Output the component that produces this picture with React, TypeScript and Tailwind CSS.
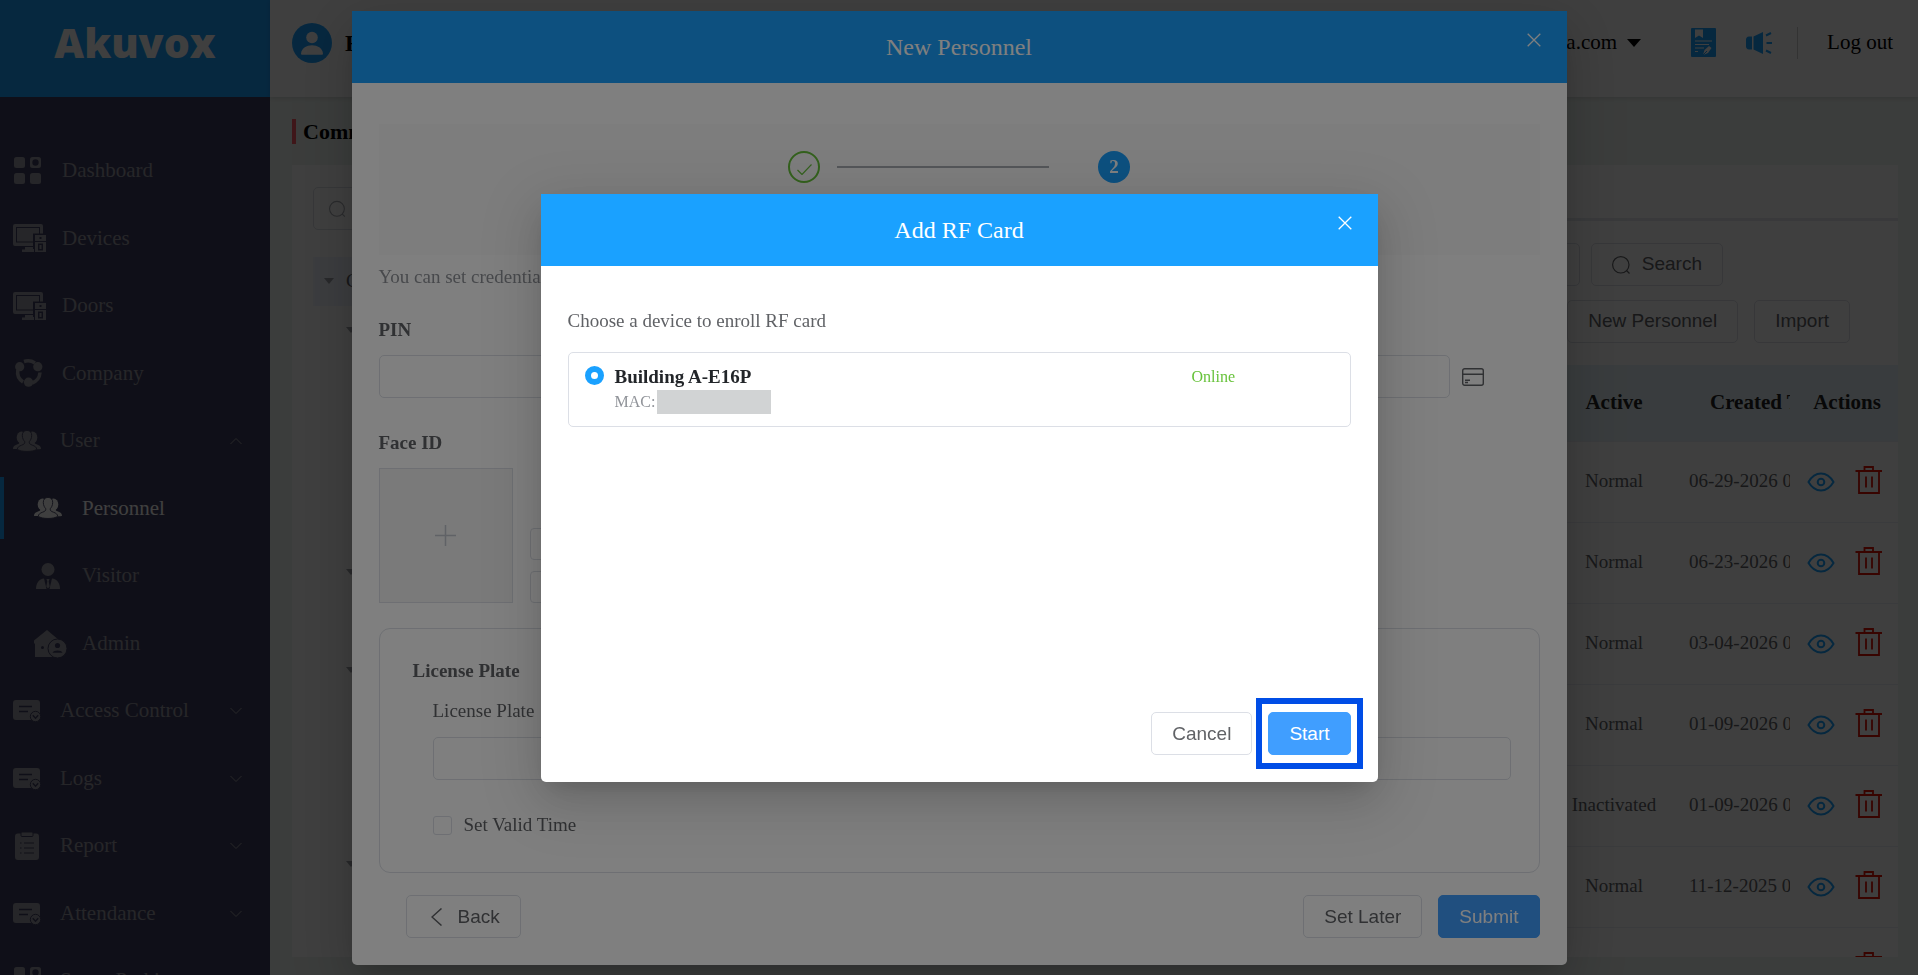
import type { ReactNode } from "react";
import clsx from "clsx";

const SERIF = "font-['Liberation_Serif','Times_New_Roman',serif]";
const SANS = "font-['Liberation_Sans',Arial,sans-serif]";

/* ---------- icons ---------- */

function GridIcon() {
  return (
    <svg className="w-7 h-7" viewBox="0 0 28 28" fill="currentColor">
      <rect x="1" y="0" width="11" height="11" rx="2.500" />
      <path fillRule="evenodd" d="M19.500 0h6A2.500 2.500 0 0 1 28 2.500v6a2.500 2.500 0 0 1-2.500 2.500h-6A2.500 2.500 0 0 1 17 8.500v-6A2.500 2.500 0 0 1 19.500 0zm3 2.300a3.200 3.200 0 1 0 0 6.400 3.200 3.200 0 0 0 0-6.400z" />
      <rect x="1" y="16" width="11" height="11" rx="2.500" />
      <rect x="17" y="16" width="11" height="11" rx="2.500" />
    </svg>
  );
}

function DeviceIcon() {
  return (
    <svg className="w-[34px] h-7" viewBox="0 0 34 28" fill="currentColor">
      <path fillRule="evenodd" d="M2 0h26a2 2 0 0 1 2 2v7.500h-3V3H3v15.500h17V22H2a2 2 0 0 1-2-2V2a2 2 0 0 1 2-2z" />
      <path d="M4 4h22v5.500h-6V17.500H4z" />
      <path d="M12 23h8v2h1v3H9v-2.500h3z" />
      <path fillRule="evenodd" d="M22 11h11v6H22zm4.500 2v2h2v-2z" />
      <path fillRule="evenodd" d="M22 18h11v10H22zm3 1.500v7h5v-7zm1.500 1.500h2v4h-2z" />
    </svg>
  );
}

function CompanyIcon() {
  return (
    <svg className="w-[30px] h-7" viewBox="-2 0 30 28">
      <g fill="none" stroke="currentColor" strokeWidth="3.500">
        <path d="M9 2.500A13 13 0 0 1 20 4" />
        <path d="M2.800 11a12 12 0 0 0 5.200 12" />
        <path d="M25 13.500a12 12 0 0 1-8 10.500" />
      </g>
      <g fill="currentColor">
        <circle cx="4.700" cy="7.700" r="4.600" />
        <circle cx="22.800" cy="7.700" r="4.600" />
        <circle cx="13.500" cy="23.200" r="4.600" />
      </g>
    </svg>
  );
}

function UsersIcon() {
  return (
    <svg className="w-7 h-[22px]" viewBox="0 0 28 22" fill="currentColor">
      <ellipse cx="8.500" cy="7.500" rx="4.800" ry="6" />
      <ellipse cx="19.500" cy="7.500" rx="4.800" ry="6" />
      <path d="M0 19c0-2.500 1.500-3.700 4-4.500 1.500-.5 2.500-1 2.500-2.500h15c0 1.500 1 2 2.500 2.500 2.500.8 4 2 4 4.500-2 .6-26 .6-28 0z" />
      <path
        stroke="#3f3f60"
        strokeWidth=".9"
        d="M14 .4c3.200 0 4.900 2.300 4.700 5.300-.2 2.800-1.200 4.700-2.400 5.900-.4 1.900.6 2.700 3.100 3.600 2.600.9 4.300 2.200 4.300 4-3 3-16.400 3-19.400 0 0-1.800 1.700-3.100 4.300-4 2.500-.9 3.500-1.700 3.100-3.600-1.200-1.200-2.200-3.100-2.400-5.900C9.100 2.700 10.800.4 14 .4z"
      />
    </svg>
  );
}

function VisitorIcon() {
  return (
    <svg className="w-[26px] h-[26px]" viewBox="-2 0 26 26" fill="currentColor">
      <circle cx="12" cy="6.500" r="6.500" />
      <path d="M0 26c0-6 3-10 8-10.500L10.500 26z" />
      <path d="M24 26c0-6-3-10-8-10.500L13.500 26z" />
      <path d="M10.500 16h3l-.8 2.500 1 5-1.700 2-1.700-2 1-5z" />
    </svg>
  );
}

function AdminIcon() {
  return (
    <svg className="w-[34px] h-7" viewBox="0 0 34 28">
      <path fill="currentColor" fillRule="evenodd" d="M13 0l12.500 10.500V27H1V13.500H0v-3zM8.500 16a1.500 1.500 0 1 0 0 3 1.500 1.500 0 0 0 0-3z" />
      <circle cx="23.500" cy="18.500" r="9.500" fill="currentColor" stroke="#3f3f60" strokeWidth="1" />
      <circle cx="23.500" cy="15.500" r="2.600" fill="#3f3f60" />
      <path fill="#3f3f60" d="M18.500 22.800c1-3.200 9-3.200 10 0z" />
    </svg>
  );
}

function CardCheckIcon() {
  return (
    <svg className="w-7 h-[22px]" viewBox="0 0 28 22">
      <rect width="27" height="20" rx="3" fill="currentColor" />
      <path d="M6 6.500h13M6 11.500h9" stroke="#3f3f60" strokeWidth="1.300" />
      <circle cx="22.500" cy="16.500" r="5.200" fill="currentColor" stroke="#3f3f60" strokeWidth="1" />
      <path d="M19.800 15.300l2.700 3 2.700-3" fill="none" stroke="#3f3f60" strokeWidth="1.400" />
    </svg>
  );
}

function ReportIcon() {
  return (
    <svg className="w-[26px] h-7" viewBox="-2 0 26 28">
      <rect y="1.500" width="24" height="26.500" rx="3" fill="currentColor" />
      <rect x="6" y="0" width="12" height="4.500" rx="1" fill="currentColor" stroke="#3f3f60" strokeWidth="1" />
      <path d="M9 11h10M9 16h10M9 21h10M5 11h1.500M5 16h1.500M5 21h1.500" stroke="#3f3f60" strokeWidth="1.200" />
    </svg>
  );
}

function ChevronIcon({ up }: { up?: boolean }) {
  return (
    <svg className="w-3 h-2" viewBox="0 0 12 8" fill="none" stroke="currentColor">
      <path d={up ? "M.5 7L6 1.500 11.500 7" : "M.5 1L6 6.500 11.500 1"} />
    </svg>
  );
}

function SearchIcon() {
  return (
    <svg className="w-[18px] h-[18px]" viewBox="0 0 18 18" fill="none" stroke="currentColor" strokeWidth="1.200">
      <circle cx="8.800" cy="8.800" r="8.200" />
      <path d="M14.500 14.500l3 3" />
    </svg>
  );
}

function CloseIcon() {
  return (
    <svg className="w-[14px] h-[14px]" viewBox="0 0 14 14" fill="none" stroke="currentColor" strokeWidth="1.300">
      <path d="M.7.700l12.600 12.600M13.300.700L.7 13.300" />
    </svg>
  );
}

function EyeIcon() {
  return (
    <svg className="w-7 h-5" viewBox="0 0 28 20" fill="none" stroke="#1aa1ff" strokeWidth="2">
      <path d="M1.500 10C8-1.300 20-1.300 26.500 10 20 21.300 8 21.300 1.500 10z" />
      <circle cx="14" cy="10" r="3.300" />
    </svg>
  );
}

function TrashIcon() {
  return (
    <svg className="w-7 h-7" viewBox="0 0 28 28" fill="none" stroke="#e01000" strokeWidth="1.800">
      <path d="M.5 5h26.500M9.500 5V1h8.500v4M4 5v22h20V5" />
      <path d="M11 10.500v11M17 10.500v11" />
    </svg>
  );
}

/* ---------- page behind the dialogs ---------- */

type MenuItem = { label: string; icon: ReactNode; kind: "top" | "group" | "sub"; open?: boolean; active?: boolean };

const menu: MenuItem[] = [
  { label: "Dashboard", icon: <GridIcon />, kind: "top" },
  { label: "Devices", icon: <DeviceIcon />, kind: "top" },
  { label: "Doors", icon: <DeviceIcon />, kind: "top" },
  { label: "Company", icon: <CompanyIcon />, kind: "top" },
  { label: "User", icon: <UsersIcon />, kind: "group", open: true },
  { label: "Personnel", icon: <UsersIcon />, kind: "sub", active: true },
  { label: "Visitor", icon: <VisitorIcon />, kind: "sub" },
  { label: "Admin", icon: <AdminIcon />, kind: "sub" },
  { label: "Access Control", icon: <CardCheckIcon />, kind: "group" },
  { label: "Logs", icon: <CardCheckIcon />, kind: "group" },
  { label: "Report", icon: <ReportIcon />, kind: "group" },
  { label: "Attendance", icon: <CardCheckIcon />, kind: "group" },
  { label: "Smart Parking", icon: <GridIcon />, kind: "group" },
];

function Sidebar() {
  return (
    <aside className="w-[270px] shrink-0 flex flex-col bg-[#3f3f60] overflow-hidden">
      <div className="h-[97px] shrink-0 bg-[#1aa1ff] flex justify-center pt-3">
        <span className="font-['Open_Sans','Noto_Sans',sans-serif] font-extrabold text-[41px] leading-[60px] text-white">
          Akuvox
        </span>
      </div>
      <nav className="mt-10 shrink-0 h-[878px] grid auto-rows-fr text-[21px] text-[#9a9aa4]">
        {menu.map((item) => (
          <a
            key={item.label}
            href="#"
            className={clsx(
              "flex items-center pr-[28px]",
              item.kind === "sub" ? "pl-[34px]" : "pl-[13px]",
              item.active && "text-white"
            )}
          >
            {item.active && <span className="w-1 h-[62px] -ml-[34px] mr-[30px] bg-[#1aa1ff]" />}
            <span className={clsx("flex", item.kind === "top" ? "w-[49px]" : item.kind === "group" ? "w-[47px]" : "w-[48px]")}>
              {item.icon}
            </span>
            <span className="flex-1">{item.label}</span>
            {item.kind === "group" && <ChevronIcon up={item.open} />}
          </a>
        ))}
      </nav>
    </aside>
  );
}

function TopBar() {
  return (
    <header className="relative h-[97px] shrink-0 bg-white shadow-[0_1px_5px_rgba(0,0,0,0.14)] flex items-center pl-[22px] pr-[25px] pb-[12px]">
      <svg className="w-10 h-10" viewBox="0 0 40 40">
        <circle cx="20" cy="20" r="20" fill="#1aa1ff" />
        <circle cx="20" cy="14.500" r="5.800" fill="#fff" />
        <path d="M9 30.500c1-11 21-11 22 0 0 .8-.5 1.300-1.300 1.300H10.300c-.8 0-1.300-.5-1.300-1.300z" fill="#fff" />
      </svg>
      <span className="ml-[13px] text-[24px] font-bold text-black">Hi</span>
      <div className="ml-auto flex items-center text-[21px] text-black">
        <button className="flex items-center gap-[10px]">
          admin@a.com
          <svg className="w-[14px] h-2" viewBox="0 0 14 8">
            <path d="M0 0h14L7 8z" />
          </svg>
        </button>
        <button aria-label="Documents" className="ml-[50px]">
          <svg className="w-[25px] h-[29px]" viewBox="0 0 25 29">
            <rect width="25" height="29" rx="1" fill="#1aa1ff" />
            <path d="M4 1.500h8V10L8 7.500 4 10z" fill="#fff" />
            <path d="M4 13h17M4 16.500h14M4 20h9M4 23.500h3" stroke="#fff" strokeWidth="1.200" />
            <path d="M12 27l1.500-5 4.500-4 2.500 2-3.500 5z" fill="#fff" />
            <path d="M12 27l4-4" stroke="#1aa1ff" />
          </svg>
        </button>
        <button aria-label="Announcements" className="ml-[30px]">
          <svg className="w-[26px] h-6" viewBox="0 0 26 24">
            <path d="M3 5.500h3v13H3c-2 0-3-1.500-3-3v-7c0-1.500 1-3 3-3zM7.500 5.500L17 1v22l-9.500-4.500z" fill="#1aa1ff" />
            <path d="M20 4.500L25 2M20.500 12H26M20 19.500l5 2.500" stroke="#1aa1ff" strokeWidth="2" />
          </svg>
        </button>
        <span className="ml-[25px] w-px h-8 bg-[#ccc]" />
        <a href="#" className="ml-[29px]">Log out</a>
      </div>
    </header>
  );
}

const tree = [
  { label: "Community", level: 0, open: true },
  { label: "Block A", level: 1, open: true },
  { label: "101", level: 2 },
  { label: "102", level: 2 },
  { label: "103", level: 2 },
  { label: "104", level: 2 },
  { label: "Block B", level: 1, open: true },
  { label: "201", level: 2 },
  { label: "Block C", level: 1, open: true },
  { label: "301", level: 2 },
  { label: "302", level: 2 },
  { label: "303", level: 2 },
  { label: "Block D", level: 1, open: true },
];

function CommunityTree() {
  return (
    <div className="w-[330px] shrink-0 pl-[21px] pt-[22px]">
      <div className="h-[43px] flex items-center gap-3 border border-[#dcdfe6] rounded-[5px] pl-[15px] text-[#a8abb2]">
        <SearchIcon />
        <input aria-label="Search community" className="w-full min-w-0 outline-none" />
      </div>
      <ul className="mt-[27px] h-[631px] grid auto-rows-fr text-[19px] text-[#606266]">
        {tree.map((node) => (
          <li
            key={node.label}
            className={clsx(
              "flex items-center",
              node.level === 0 && "bg-[#f0f4ff] pl-[11px]",
              node.level === 1 && "pl-[33px]",
              node.level === 2 && "pl-[66px]"
            )}
          >
            {node.open && (
              <svg className="w-[10px] h-[6px] mr-3" viewBox="0 0 10 6" fill="#a0a3aa">
                <path d="M0 0h10L5 6z" />
              </svg>
            )}
            {node.label}
          </li>
        ))}
      </ul>
    </div>
  );
}

const people = [
  { active: "Normal", created: "06-29-2026 0" },
  { active: "Normal", created: "06-23-2026 0" },
  { active: "Normal", created: "03-04-2026 0" },
  { active: "Normal", created: "01-09-2026 0" },
  { active: "Inactivated", created: "01-09-2026 0" },
  { active: "Normal", created: "11-12-2025 0" },
  { active: "Normal", created: "11-12-2025 0" },
];

function PersonnelList() {
  const button = clsx(SANS, "h-[43px] px-5 border border-[#dcdfe6] rounded-[5px] text-[19px] text-[#606266]");
  return (
    <div className="flex-1 min-w-0 pt-[53px]">
      <div className="h-[3px] bg-[#e4e7ed]" />
      <div className="mt-[22px] pr-[175px] flex justify-end gap-[11px]">
        <input aria-label="Name" className="w-[300px] h-[43px] border border-[#dcdfe6] rounded-[5px]" />
        <button className={clsx(button, "flex items-center gap-3")}>
          <SearchIcon />
          Search
        </button>
      </div>
      <div className="mt-[14px] pr-12 flex justify-end gap-4">
        <button className={button}>New Personnel</button>
        <button className={button}>Import</button>
      </div>
      <table className="mt-[22px] w-full table-fixed text-[19px] text-[#606266]">
        <thead>
          <tr className="h-[76px] bg-[#e6f3f8] border-b border-[#ebeef5] text-[21px] text-[#222]">
            <th />
            <th className="w-[126px]">Active</th>
            <th className="w-[113px] pl-[33px] text-left whitespace-nowrap overflow-hidden">Created Time</th>
            <th className="w-[108px] pl-[6px]">Actions</th>
          </tr>
        </thead>
        <tbody>
          {people.map((p, i) => (
            <tr key={i} className="h-[81px] border-b border-[#ebeef5]">
              <td />
              <td className="text-center">{p.active}</td>
              <td className="pl-3 whitespace-nowrap overflow-hidden">{p.created}</td>
              <td>
                <div className="flex items-center pl-[17px] gap-5">
                  <button aria-label="View"><EyeIcon /></button>
                  <button aria-label="Delete" className="pb-1"><TrashIcon /></button>
                </div>
              </td>
            </tr>
          ))}
        </tbody>
      </table>
    </div>
  );
}

/* ---------- dialogs ---------- */

function Dialog({ title, className, children }: { title: string; className: string; children: ReactNode }) {
  return (
    <div className="fixed inset-0 flex justify-center items-start bg-black/50">
      <section
        role="dialog"
        aria-label={title}
        className={clsx(
          "flex flex-col bg-white rounded-b-[5px] shadow-[0_16px_64px_20px_rgba(0,0,0,0.08),0_16px_43px_rgba(0,0,0,0.12),0_10px_21px_-10px_rgba(0,0,0,0.16)]",
          className
        )}
      >
        <header className="relative h-[72px] shrink-0 flex items-center justify-center bg-[#1aa1ff] text-white">
          <h2 className="text-[24px] font-medium">{title}</h2>
          <button aria-label="Close" className="absolute right-[26px] top-[22px]">
            <CloseIcon />
          </button>
        </header>
        {children}
      </section>
    </div>
  );
}

function Button({ primary, children }: { primary?: boolean; children: ReactNode }) {
  return (
    <button
      className={clsx(
        SANS,
        "h-[43px] px-5 flex items-center border rounded-[5px] text-[19px]",
        primary ? "bg-[#409eff] border-[#409eff] text-white" : "bg-white border-[#dcdfe6] text-[#606266]"
      )}
    >
      {children}
    </button>
  );
}

function NewPersonnelDialog() {
  return (
    <Dialog title="New Personnel" className="w-[1215px] mt-[11px]">
      <div className="px-[27px] pt-[41px] pb-[27px] text-[19px] leading-6 text-[#606266]">
        <ol className="h-[131px] pt-[27px] flex justify-center items-start bg-[#fafafa]">
          <li className="w-8 h-8 flex items-center justify-center rounded-full border-2 border-[#67c23a] text-[#67c23a]">
            <svg className="w-[15px] h-[11px] mt-1" viewBox="0 0 15 11" fill="none" stroke="currentColor" strokeWidth="1.200">
              <path d="M.5 6l4.500 4.500L14.500.5" />
            </svg>
          </li>
          <li aria-hidden className="mt-[15px] ml-[17px] mr-[49px] w-[212px] h-[2px] bg-[#a8abb2]" />
          <li className="w-8 h-8 flex items-center justify-center rounded-full bg-[#1aa1ff] text-white font-bold">2</li>
        </ol>
        <p className="mt-[10px] text-[#909399]">You can set credentials for the user.</p>

        <label htmlFor="pin" className="mt-[29px] block font-bold">PIN</label>
        <div className="mt-[13px] flex items-center pr-[56px]">
          <input id="pin" className="flex-1 h-[43px] px-3 border border-[#dcdfe6] rounded-[5px]" />
          <button aria-label="Add card" className="ml-3">
            <svg className="w-[22px] h-[18px]" viewBox="0 0 22 18" fill="none" stroke="currentColor" strokeWidth="1.400">
              <rect x=".7" y=".7" width="20.600" height="16.600" rx="2" />
              <path d="M.7 6.300h20.600M3 12.200h5M3 14.500h3" />
            </svg>
          </button>
        </div>

        <h3 className="mt-[33px] font-bold">Face ID</h3>
        <div className="mt-[13px] flex items-end gap-[17px]">
          <button aria-label="Upload photo" className="w-[134px] h-[135px] flex items-center justify-center border border-[#dcdfe6] bg-[#f5f5f5] text-[#c0c4cc]">
            <svg className="w-[21px] h-[21px]" viewBox="0 0 21 21" stroke="currentColor" strokeWidth="1.500">
              <path d="M10.500 0v21M0 10.500h21" />
            </svg>
          </button>
          <div className="flex flex-col gap-[11px]">
            <button aria-label="Take photo" className="w-[90px] h-8 border border-[#dcdfe6] rounded-[4px]" />
            <button aria-label="Reset photo" className="w-[90px] h-8 border border-[#dcdfe6] rounded-[4px]" />
          </div>
        </div>

        <fieldset className="mt-[25px] h-[245px] border border-[#dcdfe6] rounded-[11px] pt-[30px] pl-[33px] pr-[28px]">
          <h3 className="font-bold">License Plate</h3>
          <div className="pl-5">
            <label htmlFor="plate" className="mt-4 block">License Plate</label>
            <input id="plate" className="mt-[14px] block w-full h-[43px] px-3 border border-[#dcdfe6] rounded-[5px]" />
            <label className="mt-[33px] flex items-center gap-3">
              <input type="checkbox" className="appearance-none w-[19px] h-[19px] border border-[#dcdfe6] rounded-[3px] bg-white" />
              Set Valid Time
            </label>
          </div>
        </fieldset>

        <footer className="mt-[22px] pl-[27px] flex gap-4">
          <Button>
            <span className="flex items-center gap-4 pl-1">
              <svg className="w-[11px] h-[18px]" viewBox="0 0 11 18" fill="none" stroke="currentColor" strokeWidth="1.500">
                <path d="M10.500.500L1 9l9.500 8.500" />
              </svg>
              Back
            </span>
          </Button>
          <span className="flex-1" />
          <Button>Set Later</Button>
          <Button primary>Submit</Button>
        </footer>
      </div>
    </Dialog>
  );
}

function AddRfCardDialog() {
  return (
    <Dialog title="Add RF Card" className="w-[837px] min-h-[588px] mt-[194px]">
      <div className="flex-1 flex flex-col px-[27px] pt-[43px] pb-[27px] text-[19px] leading-6 text-[#606266]">
        <p>Choose a device to enroll RF card</p>
        <label className="mt-[19px] h-[75px] flex items-start border border-[#dcdfe6] rounded-[5px] pt-3 pl-4">
          <input
            type="radio"
            name="device"
            defaultChecked
            className="appearance-none mt-px w-[19px] h-[19px] rounded-full border-[6px] border-[#1aa1ff] bg-white"
          />
          <span className="ml-[11px] flex-1">
            <span className="block font-bold text-[#222529]">Building A-E16P</span>
            <span className="mt-px flex gap-[2px] text-base leading-6 text-[#909399]">
              MAC:
              <span className="w-[114px] h-6 bg-[#d1d3d4]" />
            </span>
          </span>
          <span className="w-[158px] text-base leading-6 text-[#67c23a]">Online</span>
        </label>
        <footer className="mt-auto flex justify-end gap-4">
          <Button>Cancel</Button>
          <div className="relative">
            <Button primary>Start</Button>
            <span className="absolute -inset-x-3 -inset-y-[14px] border-[6px] border-[#004de6] pointer-events-none" />
          </div>
        </footer>
      </div>
    </Dialog>
  );
}

export default function App() {
  return (
    <div className={clsx(SERIF, "h-screen flex overflow-hidden bg-[#eef5f1]")}>
      <Sidebar />
      <div className="flex-1 min-w-0 flex flex-col">
        <TopBar />
        <main className="flex-1 min-h-0 flex flex-col pl-[22px] pr-5 pt-[22px] pb-[18px]">
          <div className="flex items-center gap-[7px]">
            <span className="w-1 h-[25px] bg-[#ff5a66]" />
            <h1 className="text-[22px] leading-[25px] font-bold text-black">Community</h1>
          </div>
          <div className="mt-[21px] flex-1 min-h-0 flex overflow-hidden bg-white">
            <CommunityTree />
            <PersonnelList />
          </div>
        </main>
      </div>
      <NewPersonnelDialog />
      <AddRfCardDialog />
    </div>
  );
}
